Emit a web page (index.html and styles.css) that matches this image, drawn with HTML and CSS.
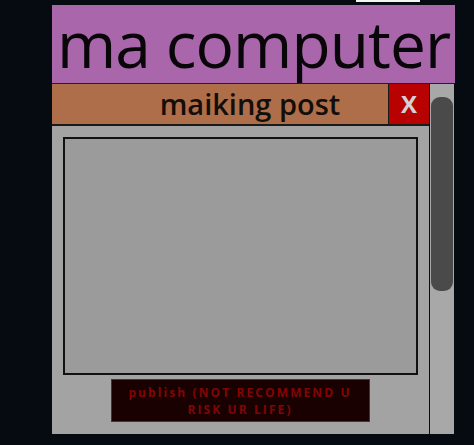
FILE: index.html
```html
<!DOCTYPE html>
<html>
<head>
<meta charset="utf-8">
<link rel="stylesheet" href="styles.css">
</head>
<body>
<div class="topline"><div class="white-tab"></div></div>
<div class="window">
  <div class="title">ma computer</div>
  <div class="body">
    <div class="main">
      <div class="header">
        <div class="bar">maiking post</div>
        <div class="close">X</div>
      </div>
      <div class="content">
        <div class="textbox"></div>
        <div class="publish">publish (NOT RECOMMEND U<br>RISK UR LIFE)</div>
      </div>
    </div>
    <div class="scroll"><div class="thumb"></div></div>
  </div>
</div>
</body>
</html>
```
FILE: styles.css
```css
html, body {
  margin: 0;
  padding: 0;
  background: #050b10;
  width: 474px;
  height: 445px;
  overflow: hidden;
  font-family: "Open Sans", "Noto Sans", sans-serif;
}
.topline {
  height: 5px;
}
.white-tab {
  margin-left: 356px;
  width: 64px;
  height: 2px;
  background: #f4f4f4;
}
.window {
  margin-left: 52px;
  width: 403px;
}
.title {
  height: 79px;
  box-sizing: border-box;
  background: #a966aa;
  color: #080608;
  font-size: 64px;
  line-height: 77px;
  white-space: nowrap;
  padding-left: 5px;
  border-bottom: 1px solid #2a1a2a;
  letter-spacing: -0.9px;
}
.body {
  display: flex;
  height: 350px;
}
.main {
  width: 377px;
  display: flex;
  flex-direction: column;
}
.header {
  display: flex;
  height: 42px;
  box-sizing: border-box;
  border-bottom: 2px solid #1a1a1a;
}
.bar {
  flex: 1;
  background: #ae6e49;
  color: #140e0a;
  font-size: 29px;
  font-weight: 600;
  line-height: 40px;
  text-align: center;
  padding-left: 60px;
  border-right: 1px solid #1a1a1a;
}
.close {
  width: 40px;
  background: #b80202;
  color: #d2d2d2;
  font-size: 24px;
  font-weight: 700;
  line-height: 40px;
  text-align: center;
}
.content {
  flex: 1;
  background: #a3a3a3;
  display: flex;
  flex-direction: column;
  align-items: center;
  padding: 11px 11px 0 11px;
}
.textbox {
  width: 355px;
  height: 238px;
  box-sizing: border-box;
  border: 2px solid #111;
  background: #9b9b9b;
}
.publish {
  margin-top: 4px;
  width: 259px;
  height: 43px;
  box-sizing: border-box;
  border: 1px solid #3a3a3a;
  background: #1a0101;
  color: #820505;
  font-size: 12px;
  font-weight: 700;
  letter-spacing: 2.1px;
  line-height: 17px;
  text-align: center;
  padding-top: 4px;
  margin-left: -1px;
}
.scroll {
  width: 25px;
  box-sizing: border-box;
  border-left: 1px solid #0c0c0c;
  background: #a8a8a8;
  padding: 13px 1px 0 1px;
}
.thumb {
  height: 194px;
  background: #4a4a4a;
  border-radius: 9px;
}
```
